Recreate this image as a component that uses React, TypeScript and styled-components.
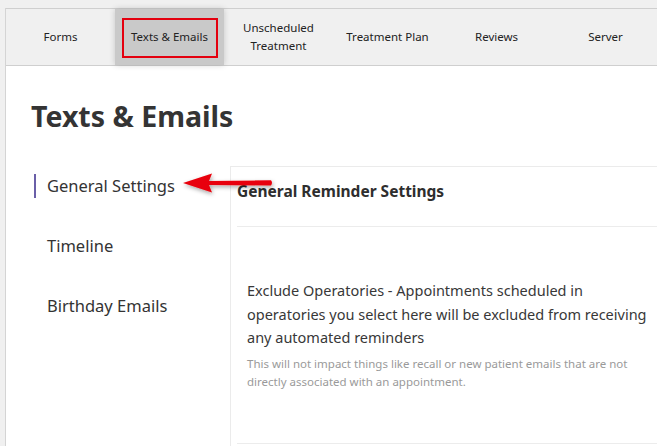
import styled, { createGlobalStyle } from "styled-components";

const GlobalStyle = createGlobalStyle`
  html, body {
    margin: 0;
    padding: 0;
    background: #f0f0f0;
    overflow: hidden;
  }
  * {
    box-sizing: border-box;
  }
`;

const tabs = [
  "Forms",
  "Texts & Emails",
  "Unscheduled Treatment",
  "Treatment Plan",
  "Reviews",
  "Server",
];

const sideItems = ["General Settings", "Timeline", "Birthday Emails"];

function App() {
  return (
    <Shell>
      <GlobalStyle />
      <Frame>
        <TabBar>
          {tabs.map((t) => (
            <Tab key={t} $active={t === "Texts & Emails"}>
              <TabLabel>{t}</TabLabel>
              {t === "Texts & Emails" && <Highlight />}
            </Tab>
          ))}
        </TabBar>
        <Content>
          <Title>Texts &amp; Emails</Title>
          <Body>
            <Sidebar>
              {sideItems.map((s, i) => (
                <SideItem key={s} $active={i === 0}>
                  {s}
                </SideItem>
              ))}
              <Arrow width="90" height="24" viewBox="0 0 90 24">
                <defs>
                  <filter id="sh" x="-20%" y="-50%" width="140%" height="200%">
                    <feDropShadow dx="1" dy="2" stdDeviation="2" floodColor="#000" floodOpacity="0.35" />
                  </filter>
                </defs>
                <g filter="url(#sh)">
                  <path d="M0 12 L29 2.5 L26 10 L88 9.3 Q90 11.5 88 14.5 L26 14 L29 21.5 Z" fill="#e8000b" />
                </g>
              </Arrow>
            </Sidebar>
            <Card>
              <CardHeader>General Reminder Settings</CardHeader>
              <Section>
                <SettingLabel>
                  Exclude Operatories - Appointments scheduled in operatories you select here will be
                  excluded from receiving any automated reminders
                </SettingLabel>
                <SettingHint>
                  This will not impact things like recall or new patient emails that are not directly
                  associated with an appointment.
                </SettingHint>
              </Section>
            </Card>
          </Body>
        </Content>
      </Frame>
    </Shell>
  );
}

const Shell = styled.div`
  width: 657px;
  height: 446px;
  padding: 8px 0 0 5px;
  background: #f0f0f0;
  font-family: "Noto Sans", "Open Sans", sans-serif;
  overflow: hidden;
`;

const Frame = styled.div`
  height: 100%;
  border-left: 1px solid #d4d4d4;
  background: #fff;
  display: flex;
  flex-direction: column;
`;

const TabBar = styled.div`
  display: flex;
  height: 58px;
  background: #f0f0f0;
  border-top: 1px solid #cfcfcf;
  border-bottom: 1px solid #cfcfcf;
`;

const Tab = styled.div<{ $active?: boolean }>`
  position: relative;
  flex: 0 0 109px;
  display: flex;
  align-items: center;
  justify-content: center;
  text-align: center;
  background: ${(p) => (p.$active ? "#c9c9c9" : "transparent")};
  box-shadow: ${(p) => (p.$active ? "0 0 6px rgba(0,0,0,0.18)" : "none")};
`;

const TabLabel = styled.span`
  font-size: 11.5px;
  line-height: 18px;
  color: #222;
  padding: 0 8px;
`;

const Highlight = styled.div`
  position: absolute;
  left: 7px;
  right: 6px;
  top: 9px;
  bottom: 7px;
  border: 2px solid #e4000f;
`;

const Content = styled.div`
  flex: 1;
  padding: 30px 0 0 25px;
  display: flex;
  flex-direction: column;
`;

const Title = styled.h1`
  margin: 0;
  font-size: 28.5px;
  font-weight: 700;
  color: #343434;
  line-height: 40px;
`;

const Body = styled.div`
  display: grid;
  grid-template-columns: 199px 1fr;
  margin-top: 30px;
  flex: 1;
`;

const Sidebar = styled.div`
  position: relative;
  display: flex;
  flex-direction: column;
  padding-top: 8px;
  gap: 36px;
`;

const SideItem = styled.div<{ $active?: boolean }>`
  font-size: 16.5px;
  line-height: 24px;
  color: #333;
  padding-left: 11px;
  margin-left: 3px;
  border-left: 2px solid ${(p) => (p.$active ? "#6a5fa8" : "transparent")};
`;

const Arrow = styled.svg`
  position: absolute;
  left: 152px;
  top: 5px;
  overflow: visible;
`;

const Card = styled.div`
  border-top: 1px solid #ebebeb;
  border-left: 1px solid #ebebeb;
  padding: 0 0 0 6px;
`;

const CardHeader = styled.div`
  font-size: 15.5px;
  font-weight: 700;
  color: #2e2e2e;
  padding: 13px 0 0;
  height: 60px;
  border-bottom: 1px solid #ececec;
`;

const Section = styled.div`
  padding: 52px 0 0 10px;
  height: 217px;
  border-bottom: 1px solid #ececec;
`;

const SettingLabel = styled.div`
  font-size: 14.5px;
  line-height: 23.5px;
  color: #383838;
`;

const SettingHint = styled.div`
  margin-top: 5px;
  font-size: 11.5px;
  line-height: 18px;
  color: #9a9a9a;
`;

export default App;
